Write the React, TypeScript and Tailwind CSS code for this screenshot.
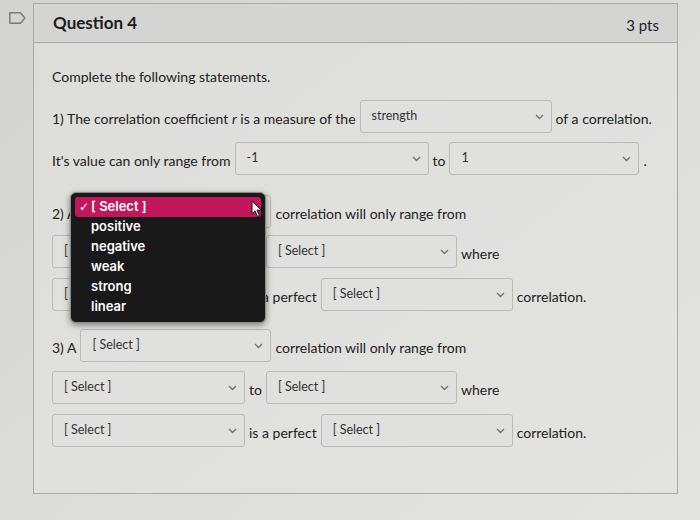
import React from "react";

function Chevron() {
  return (
    <svg width="9" height="6" viewBox="0 0 9 6" className="shrink-0">
      <path d="M1 1 L4.5 4.5 L8 1" fill="none" stroke="#6f6f6f" strokeWidth="1.3" />
    </svg>
  );
}

function Sel({ label, w = "w-[193px]" }: { label: string; w?: string }) {
  return (
    <div
      className={`${w} h-[33px] shrink-0 flex items-center justify-between pl-[11px] pr-[7px] border border-[#b9b9b7] rounded-[3px] bg-[#e0e0de] text-[12.5px] text-[#333]`}
    >
      <span>{label}</span>
      <Chevron />
    </div>
  );
}

function T({ children }: { children: React.ReactNode }) {
  return <span className="pt-[4px] whitespace-nowrap">{children}</span>;
}

export default function App() {
  return (
    <div
      className="relative w-[700px] h-[520px] overflow-hidden bg-linear-to-br from-[#d3d3d1] via-[#dcdcda] to-[#e4e4e2] text-[#222]"
      style={{ fontFamily: "Lato, 'Open Sans', sans-serif" }}
    >
      <div className="flex">
        <div className="w-[33px] shrink-0 pt-[11px] pl-[8px]">
          <svg width="19" height="14" viewBox="0 0 19 14">
            <path
              d="M1.8 1.8 H12.5 L16.8 7 L12.5 12.2 H1.8 Z"
              fill="none"
              stroke="#7b7b7b"
              strokeWidth="1.5"
              strokeLinejoin="round"
            />
          </svg>
        </div>
        <div className="mt-[3px] w-[645px] h-[491px] shrink-0 border border-[#a9a9a7] bg-[#e2e2e0]/60 flex flex-col">
          <div className="h-[39px] shrink-0 flex items-center justify-between pl-[19px] pr-[18px] bg-[#d4d4d2] border-b border-[#a9a9a7]">
            <span className="text-[17px] font-bold text-[#1c1c1c]">Question 4</span>
            <span className="text-[15px] pt-[4px] text-[#222]">3 pts</span>
          </div>
          <div className="flex flex-col pl-[18px] pt-[24px] text-[14px]">
            <div className="h-[20px] leading-[20px]">Complete the following statements.</div>

            <div className="mt-[13px] h-[33px] flex items-center gap-[4px]">
              <T>
                1) The correlation coefficient <i>r</i> is a measure of the
              </T>
              <Sel label="strength" w="w-[192px]" />
              <T>of a correlation.</T>
            </div>

            <div className="mt-[9px] h-[33px] flex items-center gap-[4px]">
              <T>It's value can only range from</T>
              <Sel label="-1" w="w-[194px]" />
              <T>to</T>
              <Sel label="1" w="w-[190px]" />
              <T>.</T>
            </div>

            <div className="mt-[20px] h-[33px] flex items-center gap-[4px]">
              <T>2) A</T>
              <Sel label="[ Select ]" w="w-[191px]" />
              <T>correlation will only range from</T>
            </div>
            <div className="mt-[7px] h-[33px] flex items-center gap-[4px]">
              <Sel label="[ Select ]" />
              <T>to</T>
              <Sel label="[ Select ]" w="w-[191px]" />
              <T>where</T>
            </div>
            <div className="mt-[10px] h-[33px] flex items-center gap-[4px]">
              <Sel label="[ Select ]" />
              <T>is a perfect</T>
              <Sel label="[ Select ]" w="w-[192px]" />
              <T>correlation.</T>
            </div>

            <div className="mt-[18px] h-[33px] flex items-center gap-[4px]">
              <T>3) A</T>
              <Sel label="[ Select ]" w="w-[191px]" />
              <T>correlation will only range from</T>
            </div>
            <div className="mt-[9px] h-[33px] flex items-center gap-[4px]">
              <Sel label="[ Select ]" />
              <T>to</T>
              <Sel label="[ Select ]" w="w-[191px]" />
              <T>where</T>
            </div>
            <div className="mt-[10px] h-[33px] flex items-center gap-[4px]">
              <Sel label="[ Select ]" />
              <T>is a perfect</T>
              <Sel label="[ Select ]" w="w-[192px]" />
              <T>correlation.</T>
            </div>
          </div>
        </div>
      </div>

      {/* open dropdown menu */}
      <div
        className="absolute left-[70px] top-[192px] w-[196px] h-[131px] rounded-[6px] border border-[#8c8c8c] bg-[#191919] shadow-[0_2px_6px_rgba(0,0,0,0.45)] p-[4px] text-white text-[13px] font-semibold"
        style={{ fontFamily: "Inter, 'Liberation Sans', sans-serif" }}
      >
        <div className="h-[20px] rounded-[3px] bg-[#c3175b] flex items-center pl-[4px]">
          <span className="w-[12px] text-[12px]" style={{ fontFamily: "'DejaVu Sans', sans-serif" }}>✓</span>
          <span>[ Select ]</span>
        </div>
        {["positive", "negative", "weak", "strong", "linear"].map((o) => (
          <div key={o} className="h-[20px] flex items-center pl-[16px]">
            {o}
          </div>
        ))}
      </div>

      {/* mouse cursor */}
      <svg className="absolute left-[251px] top-[200px]" width="12" height="18" viewBox="0 0 12 18">
        <path
          d="M1 1 L1 14 L4 11 L6.5 16.5 L8.5 15.5 L6 10.2 L10.3 10.2 Z"
          fill="#f2f2f2"
          stroke="#111"
          strokeWidth="1"
          strokeLinejoin="round"
        />
      </svg>
    </div>
  );
}
